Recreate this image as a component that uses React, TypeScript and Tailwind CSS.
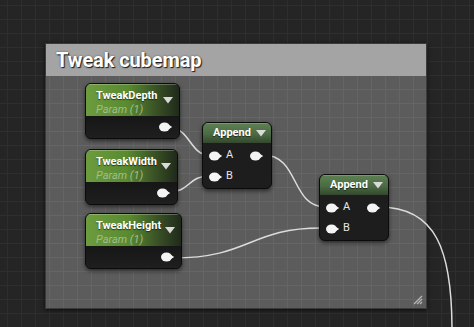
const font = { fontFamily: 'Roboto, "Noto Sans", sans-serif' }

type Side = 'in' | 'out'

function Pin() {
  return (
    <svg width="14" height="10" viewBox="0 0 14 10" className="block">
      <ellipse cx="5.5" cy="5" rx="5.5" ry="4.6" fill="#f4f4f4" />
      <polygon points="10,3 13.2,5 10,7" fill="#f4f4f4" />
    </svg>
  )
}

function Triangle() {
  return (
    <svg width="10" height="7" viewBox="0 0 10 7" className="block">
      <polygon points="0,0 10,0 5,6.5" fill="#dadada" />
    </svg>
  )
}

function ParamNode({ x, y, w, title }: { x: number; y: number; w: number; title: string }) {
  return (
    <div
      className="absolute flex h-[56px] flex-col overflow-hidden rounded-[6px] border border-[#0b0b0b] bg-[#1c1d1c] shadow-[0_2px_4px_rgba(0,0,0,0.55)]"
      style={{ left: x, top: y, width: w }}
    >
      <div className="flex h-[32px] shrink-0 items-start justify-between bg-[linear-gradient(to_right,#6c9c3e_0%,#5a8a30_45%,#3a5226_75%,#1f2a1a_100%)] pl-[10px] pr-[6px] pt-[5px] shadow-[inset_0_1px_0_rgba(255,255,255,0.25)]">
        <div className="flex flex-col leading-[14px]">
          <span className="text-[11px] font-bold text-white [text-shadow:0_1px_1px_rgba(0,0,0,0.6)]">{title}</span>
          <span className="text-[11px] italic text-[#a3bd8a]">Param (1)</span>
        </div>
        <div className="pt-[8px]"><Triangle /></div>
      </div>
      <div className="flex flex-1 items-center justify-end bg-[linear-gradient(to_bottom,#151615,#1e1f1e)] pr-[6px]">
        <Pin />
      </div>
    </div>
  )
}

function AppendNode({ x, y }: { x: number; y: number }) {
  const row = (label: string, side: Side | 'both') => (
    <div className="flex h-[21px] items-center justify-between">
      <div className="flex items-center gap-[3px]">
        <Pin />
        <span className="text-[11px] text-[#e6e6e6]">{label}</span>
      </div>
      {side === 'both' ? <Pin /> : null}
    </div>
  )
  return (
    <div
      className="absolute flex h-[67px] w-[70px] flex-col overflow-hidden rounded-[6px] border border-[#0b0b0b] bg-[#1c1d1c] shadow-[0_2px_4px_rgba(0,0,0,0.55)]"
      style={{ left: x, top: y }}
    >
      <div className="flex h-[20px] shrink-0 items-center justify-between bg-[linear-gradient(to_bottom,#5d8052_0%,#4b6c43_55%,#34472f_100%)] pl-[10px] pr-[5px] shadow-[inset_0_1px_0_rgba(255,255,255,0.2)]">
        <span className="text-[11px] font-bold text-white [text-shadow:0_1px_1px_rgba(0,0,0,0.6)]">Append</span>
        <Triangle />
      </div>
      <div className="flex flex-col pl-[6px] pr-[7px] pt-[2px]">
        {row('A', 'both')}
        {row('B', 'in')}
      </div>
    </div>
  )
}

export default function App() {
  return (
    <div
      className="relative h-[327px] w-[474px] overflow-hidden bg-[#252525] [background-image:linear-gradient(to_right,#2e2e2e_1px,transparent_1px),linear-gradient(to_bottom,#2e2e2e_1px,transparent_1px)] [background-position:7px_5px] [background-size:14px_14px]"
      style={font}
    >
      <div className="absolute left-[45px] top-[43px] flex h-[266px] w-[382px] flex-col border border-[#3a3a3a] shadow-[0_1px_4px_rgba(0,0,0,0.7)]">
        <div className="flex h-[32px] shrink-0 items-center bg-[#a4a4a4] pl-[10px]">
          <span className="text-[20px] font-bold tracking-[-0.1px] text-white [text-shadow:1px_1px_1px_#1a1a1a,0_0_2px_rgba(0,0,0,0.5)]">Tweak cubemap</span>
        </div>
        <div className="relative flex-1 bg-[#5c5c5c] [background-image:linear-gradient(to_right,#656565_1px,transparent_1px),linear-gradient(to_bottom,#656565_1px,transparent_1px)] [background-position:-39px_-1px] [background-size:14px_14px]">
          <svg width="10" height="10" viewBox="0 0 10 10" className="absolute bottom-[3px] right-[3px]">
            <path d="M9 1 L1 9 M9 4 L4 9 M9 7 L7 9" stroke="#b8b8b8" strokeWidth="1.2" />
          </svg>
        </div>
      </div>

      <svg width="474" height="327" className="absolute left-0 top-0" fill="none" stroke="#dcdcdc" strokeWidth="1.5">
        <path d="M170 128 C190 128 190 155 209 155" />
        <path d="M169 192 C190 192 188 176 209 176" />
        <path d="M173 258 C250 258 250 228 321 228" />
        <path d="M263 155 C300 155 290 207 326 207" />
        <path d="M379 207 C436 207 452 250 452 330" />
      </svg>

      <ParamNode x={85} y={83} w={95} title="TweakDepth" />
      <ParamNode x={85} y={149} w={93} title="TweakWidth" />
      <ParamNode x={85} y={213} w={97} title="TweakHeight" />
      <AppendNode x={202} y={122} />
      <AppendNode x={319} y={174} />
    </div>
  )
}
